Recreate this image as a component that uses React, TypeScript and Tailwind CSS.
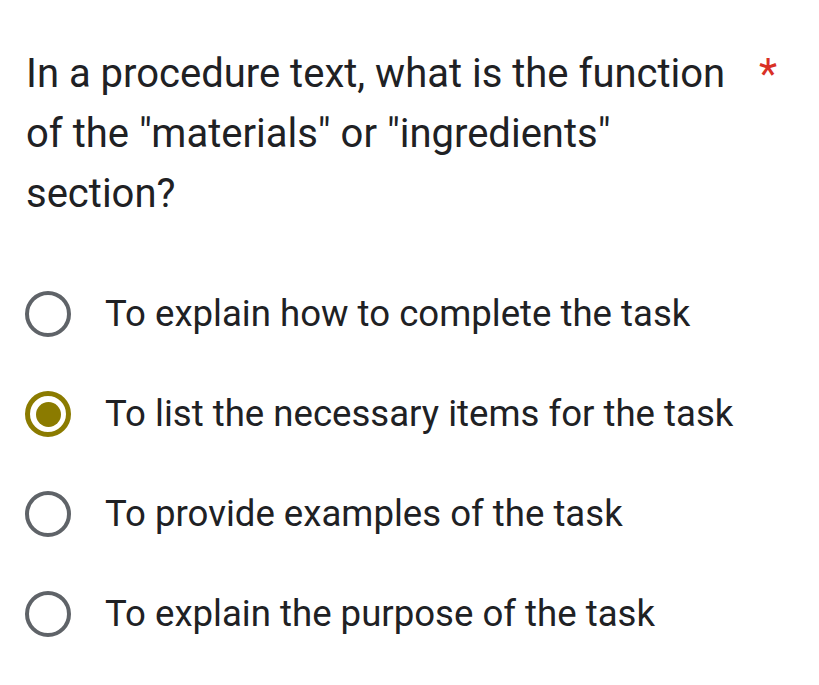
const options = [
  'To explain how to complete the task',
  'To list the necessary items for the task',
  'To provide examples of the task',
  'To explain the purpose of the task',
]

function Radio({ checked }: { checked: boolean }) {
  if (checked)
    return (
      <div className="w-[46px] h-[46px] rounded-full border-[5px] border-[#8b7b00] flex items-center justify-center shrink-0">
        <div className="w-[25px] h-[25px] rounded-full bg-[#8b7b00]" />
      </div>
    )
  return <div className="w-[46px] h-[46px] rounded-full border-[4px] border-[#5f6368] shrink-0" />
}

export default function App() {
  return (
    <div className="w-[819px] h-[685px] bg-white text-[#202124] font-['Roboto',sans-serif] overflow-hidden">
      <div className="pl-[26px] pt-[44px] flex items-start">
        <h1 className="w-[733px] text-[40px] leading-[60px] font-normal">
          In a procedure text, what is the function of the "materials" or "ingredients" section?
        </h1>
        <span className="text-[#d93025] text-[42px] leading-[60px]">*</span>
      </div>
      <div className="mt-[40px] flex flex-col">
        {options.map((o, i) => (
          <div key={o} className="h-[100px] flex items-center pl-[25px]">
            <Radio checked={i === 1} />
            <span className="ml-[34px] text-[36.6px]">{o}</span>
          </div>
        ))}
      </div>
    </div>
  )
}
